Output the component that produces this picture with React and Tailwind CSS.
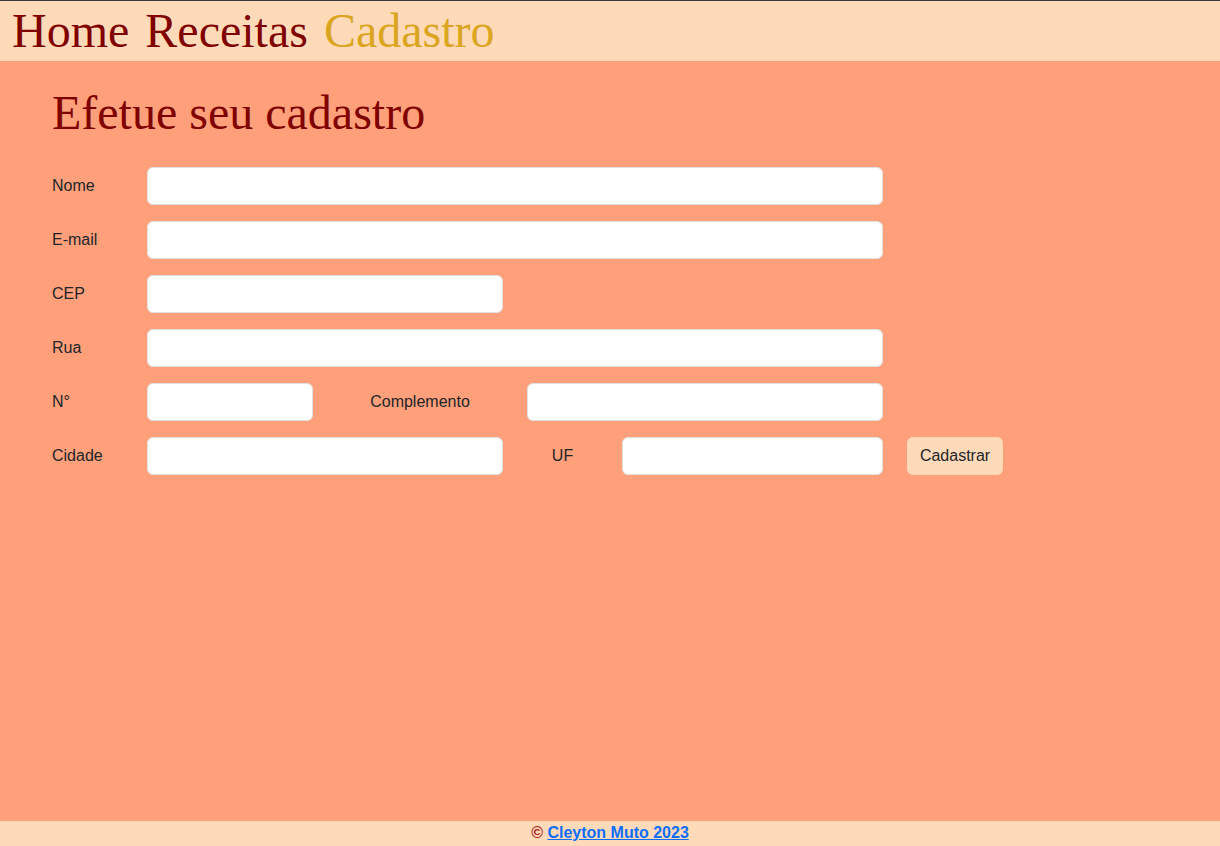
export default function App() {
  const serif = { fontFamily: '"Liberation Serif", "Times New Roman", serif' };

  return (
    <div
      className="min-h-screen flex flex-col bg-[#FFA07A] border-t border-[#3b3b3b]"
      style={{ fontFamily: '"Liberation Sans", Arial, sans-serif' }}
    >
      {/* Header */}
      <header className="h-[60px] bg-[#FFDAB9] flex items-start pl-3" style={serif}>
        <nav className="flex gap-4 text-[48px] leading-[59px]">
          <a className="text-[#800000]">Home</a>
          <a className="text-[#800000]">Receitas</a>
          <a className="text-[#DAA520]">Cadastro</a>
        </nav>
      </header>

      {/* Main */}
      <main className="flex-1 px-[52px] pt-[23px]">
        <h1 className="text-[48px] leading-[1.2] text-[#800000]" style={serif}>
          Efetue seu cadastro
        </h1>

        <form className="mt-[25px] flex flex-col gap-4 text-[16px] text-[#212529]">
          <div className="flex items-center">
            <label className="w-[95px]">Nome</label>
            <input className="w-[736px] h-[38px] bg-white border border-[#dee2e6] rounded-md px-3" />
          </div>
          <div className="flex items-center">
            <label className="w-[95px]">E-mail</label>
            <input className="w-[736px] h-[38px] bg-white border border-[#dee2e6] rounded-md px-3" />
          </div>
          <div className="flex items-center">
            <label className="w-[95px]">CEP</label>
            <input className="w-[356px] h-[38px] bg-white border border-[#dee2e6] rounded-md px-3" />
          </div>
          <div className="flex items-center">
            <label className="w-[95px]">Rua</label>
            <input className="w-[736px] h-[38px] bg-white border border-[#dee2e6] rounded-md px-3" />
          </div>
          <div className="flex items-center">
            <label className="w-[95px]">N°</label>
            <input className="w-[166px] h-[38px] bg-white border border-[#dee2e6] rounded-md px-3" />
            <label className="w-[214px] text-center">Complemento</label>
            <input className="w-[356px] h-[38px] bg-white border border-[#dee2e6] rounded-md px-3" />
          </div>
          <div className="flex items-center">
            <label className="w-[95px]">Cidade</label>
            <input className="w-[356px] h-[38px] bg-white border border-[#dee2e6] rounded-md px-3" />
            <label className="w-[119px] text-center">UF</label>
            <input className="w-[261px] h-[38px] bg-white border border-[#dee2e6] rounded-md px-3" />
            <button
              type="button"
              className="ml-6 w-[96px] h-[38px] bg-[#FFDAB9] rounded-md text-[#212529]"
            >
              Cadastrar
            </button>
          </div>
        </form>
      </main>

      {/* Footer */}
      <footer className="h-[25px] bg-[#FFDAB9] flex items-center justify-center font-bold text-[16px] leading-[24px] pb-px">
        <span className="text-[#b22222]">©&nbsp;</span>
        <a href="#" className="text-[#0d6efd] underline">
          Cleyton Muto 2023
        </a>
      </footer>
    </div>
  );
}
